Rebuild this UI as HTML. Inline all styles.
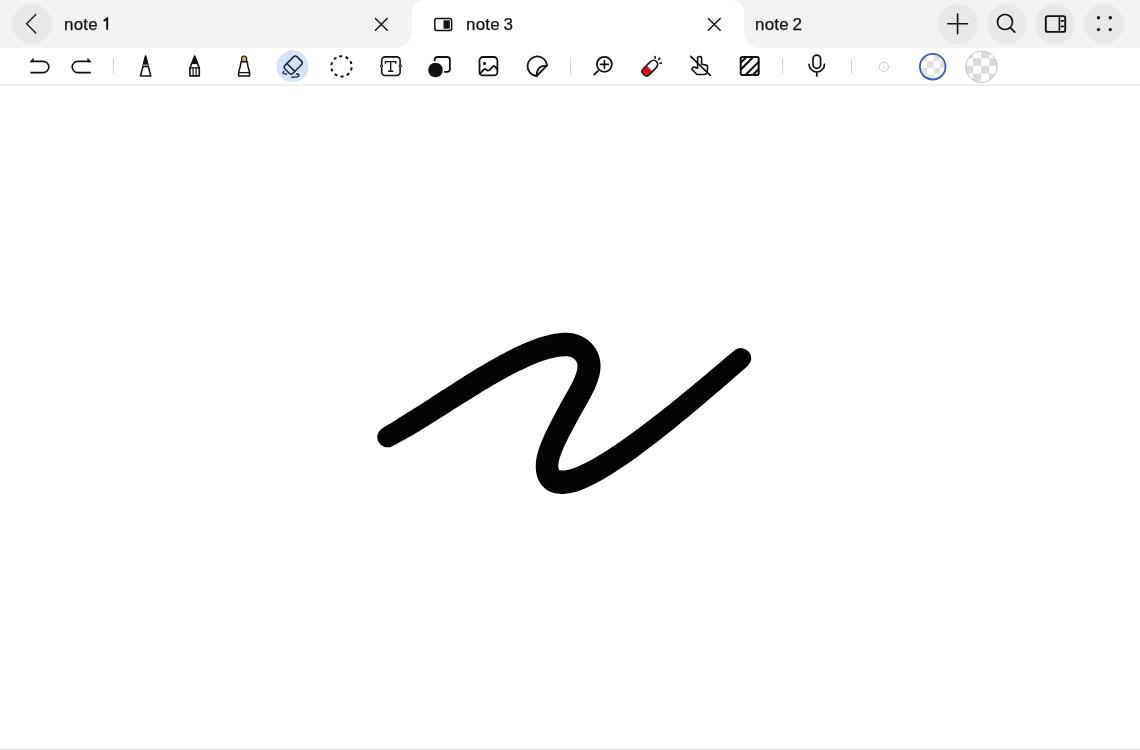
<!DOCTYPE html>
<html><head><meta charset="utf-8">
<style>
html,body{margin:0;padding:0;}
body{width:1140px;height:750px;position:relative;overflow:hidden;background:#fff;font-family:"Liberation Sans",sans-serif;}
.abs{position:absolute;}
#tabbar{left:0;top:0;width:1140px;height:48px;background:linear-gradient(#f1f2f4 0,#f1f2f4 24px,#fff 24px);}
#t1{left:0;top:0;width:412px;height:48px;background:#f1f2f4;border-bottom-right-radius:16px;}
#t3{left:412px;top:0;width:332px;height:48px;background:#fff;border-top-left-radius:12px;border-top-right-radius:12px;}
#t2{left:744px;top:0;width:396px;height:48px;background:#f1f2f4;border-bottom-left-radius:16px;}
.circ{width:40px;height:40px;border-radius:50%;background:#e7e8ea;}
.tt{font-size:17px;color:#111;line-height:20px;top:14.8px;-webkit-text-stroke:0.25px #111;letter-spacing:0.2px;word-spacing:-1.2px;will-change:transform;white-space:nowrap;}
#tb{left:0;top:48px;width:1140px;height:36px;background:#fff;border-bottom:2px solid #f0f0f0;}
#bot{left:0;top:749px;width:1140px;height:1px;background:#d6d6d6;}
svg{position:absolute;left:0;top:0;}
</style></head>
<body>
<div id="tabbar" class="abs"></div>
<div id="t1" class="abs"></div>
<div id="t3" class="abs"></div>
<div id="t2" class="abs"></div>
<div class="abs circ" style="left:11.5px;top:4px"></div>
<div class="abs circ" style="left:937.5px;top:4px"></div>
<div class="abs circ" style="left:986.5px;top:4px"></div>
<div class="abs circ" style="left:1035px;top:4px"></div>
<div class="abs circ" style="left:1084px;top:4px"></div>
<div class="abs tt" style="left:64px">note</div>
<div class="abs tt" style="left:466px">note 3</div>
<div class="abs tt" style="left:755px">note 2</div>
<div id="tb" class="abs"></div>
<div id="bot" class="abs"></div>

<svg width="1140" height="750" viewBox="0 0 1140 750" fill="none" stroke="#111" stroke-width="1.6" stroke-linecap="round" stroke-linejoin="round">
  <!-- back chevron -->
  <path d="M35.8,14.6 L26.6,23.8 L35.8,33" stroke-width="1.4" stroke="#1a1a1a"/>
  <!-- digit 1 -->
  <path d="M103.7,21 L107.2,18.4 L107.2,29.7" stroke-width="1.9" stroke-linecap="butt" stroke-linejoin="miter"/>
  <!-- close X tab1 -->
  <path d="M375.5,18.5 L387.2,30.2 M387.2,18.5 L375.5,30.2" stroke-width="1.45"/>
  <!-- tab icon -->
  <rect x="434.8" y="18.5" width="16.8" height="12" rx="2" stroke-width="1.5"/>
  <rect x="443.5" y="20.3" width="6.3" height="8.4" fill="#111" stroke="none"/>
  <!-- close X tab3 -->
  <path d="M708.4,18.4 L720.2,30.2 M720.2,18.4 L708.4,30.2" stroke-width="1.45"/>
  <!-- plus -->
  <path d="M947.8,23.8 L967.5,23.8 M957.6,14 L957.6,33.7" stroke-width="1.6"/>
  <!-- search -->
  <circle cx="1005" cy="22" r="7.5" stroke-width="1.7"/>
  <path d="M1010.6,27.8 L1014.8,32.2" stroke-width="1.7"/>
  <!-- panel -->
  <rect x="1045.8" y="16.1" width="19.4" height="15.8" rx="2" stroke-width="1.9"/>
  <path d="M1059.4,16.5 L1059.4,31.5" stroke-width="1.6"/>
  <path d="M1061.4,20.9 L1063.4,20.9 M1061.4,26.4 L1063.4,26.4" stroke-width="1.6"/>
  <!-- dots -->
  <g fill="#111" stroke="none">
    <circle cx="1098.5" cy="17.8" r="1.7"/><circle cx="1110.3" cy="17.8" r="1.7"/>
    <circle cx="1098.5" cy="29.6" r="1.7"/><circle cx="1110.3" cy="29.6" r="1.7"/>
  </g>

  <!-- undo -->
  <path d="M31,61.4 L43.2,61.4 A5.6,5.6 0 0 1 43.2,72.6 L30.4,72.6" stroke-width="1.6" stroke-linecap="butt"/>
  <path d="M29.9,61.9 L33.4,58.1 L33.8,61.9 Z" fill="#111" stroke="#111" stroke-width="0.3"/>
  <!-- redo -->
  <path d="M90.2,61.4 L77.8,61.4 A5.6,5.6 0 0 0 77.8,72.6 L90.8,72.6" stroke-width="1.6" stroke-linecap="butt"/>
  <path d="M91.2,61.9 L87.7,58.1 L87.3,61.9 Z" fill="#111" stroke="#111" stroke-width="0.3"/>
  <!-- separators -->
  <g stroke="#d4d4d4" stroke-width="1" stroke-linecap="butt">
    <path d="M113.5,58 L113.5,74"/><path d="M570.5,57.5 L570.5,74.8"/>
    <path d="M782.5,58.3 L782.5,74.2"/><path d="M851.5,58.3 L851.5,74.2"/>
  </g>

  <!-- pen 1 -->
  <path d="M145.6,56 L140.5,76 L150.8,76 Z" fill="#fff" stroke-width="1.5" stroke-linejoin="round"/>
  <path d="M145.6,56.2 L143.3,64.3 L147.9,64.3 Z" fill="#111" stroke="#111" stroke-width="1.1" stroke-linejoin="round"/>
  <path d="M143.1,64.6 L142.6,66.3 L148.6,66.3 L148.1,64.6 Z" fill="#8c8c8c" stroke="none"/>
  <path d="M142.4,66.7 L148.8,66.7" stroke-width="1.3" stroke-linecap="butt"/>
  <!-- pen 2 pencil -->
  <path d="M194.6,56.2 L189.9,68 L189.9,75.9 L199.3,75.9 L199.3,68 Z" fill="#fff" stroke-width="1.6"/>
  <path d="M194.6,56.3 L191.6,63.6 L197.6,63.6 Z" fill="#111" stroke="#111" stroke-width="1"/>
  <path d="M190.2,68.2 Q192.4,67.2 194.6,68 Q196.8,67.2 199,68.2" stroke-width="1.3"/>
  <path d="M193.1,68.3 L193.1,75.9 M196.1,68.3 L196.1,75.9" stroke-width="1.2"/>
  <!-- pen 3 marker -->
  <path d="M241.6,61.6 L241.6,58.6 A2.5,2.6 0 0 1 246.6,58.6 L246.6,61.6" fill="#c9b064" stroke-width="1.2"/>
  <path d="M241,61.8 L247.3,61.8 Q247.6,66 248.8,69.5 Q249.6,72 249.6,73 L249.6,76 L238.6,76 L238.6,73 Q238.6,72 239.4,69.5 Q240.6,66 241,61.8 Z" stroke-width="1.5"/>
  <path d="M238.8,72.6 L249.4,72.6" stroke-width="1.4"/>
  <!-- eraser selected bg -->
  <circle cx="292.6" cy="66.3" r="16" fill="#d7e2f7" stroke="none"/>
  <g transform="translate(293.2,65.1) rotate(-45)" stroke="#1c2435" stroke-width="1.5">
    <rect x="-8.6" y="-5.6" width="17.2" height="11.2" rx="2.6"/>
    <path d="M-3.3,-5.6 L-3.3,5.6"/>
  </g>
  <path d="M283.8,71.6 Q282.7,72.2 283,73.3 Q283.4,74.1 286.5,74" stroke="#1c2435" stroke-width="1.4"/>
  <path d="M296.3,74 L298.3,74 Q299.3,74.6 299,75.8 Q298.6,77.2 291.8,77.3" stroke="#1c2435" stroke-width="1.4"/>
  <!-- lasso -->
  <circle cx="341.5" cy="66.4" r="10.2" stroke-width="2" stroke-dasharray="3 3.41" stroke-linecap="butt" transform="rotate(-103 341.5 66.4)"/>
  <!-- text box -->
  <rect x="381.7" y="56.9" width="18.4" height="18.6" rx="3.5" stroke-width="1.6"/>
  <circle cx="381.5" cy="66" r="1.1" fill="#fff" stroke-width="1"/>
  <circle cx="400.2" cy="66" r="1.1" fill="#fff" stroke-width="1"/>
  <path d="M385.5,63.8 L385.5,61.6 L395.8,61.6 L395.8,63.8 M390.65,61.6 L390.65,71.3 M388,71.3 L393.3,71.3" stroke-width="1.4" stroke-linecap="butt" stroke-linejoin="miter"/>
  <!-- shapes -->
  <rect x="434.7" y="57" width="15.2" height="14.8" rx="2.8" stroke-width="1.8"/>
  <circle cx="435.5" cy="70" r="8.9" fill="#fff" stroke="none"/>
  <circle cx="435.5" cy="70" r="7.3" fill="#111" stroke="none"/>
  <!-- image -->
  <rect x="479.5" y="57" width="17.9" height="18.4" rx="3.5" stroke-width="1.8"/>
  <circle cx="484.5" cy="63.4" r="1.6" fill="#111" stroke="none"/>
  <path d="M479.8,73.8 L484,69.3 Q484.8,68.6 485.7,69.2 L487.4,70.4 Q488.4,71 489.3,70.2 L493,66.4 Q493.8,65.7 494.6,66.4 L497.2,69" stroke-width="1.8"/>
  <!-- sticker -->
  <path d="M536.7,76 A9.8,9.8 0 1 1 547.1,65.4 Z" stroke-width="1.8"/>
  <path d="M547.1,65.6 C541,65.4 536.8,67.5 536.7,75.8" stroke-width="1.8"/>
  <!-- zoom -->
  <circle cx="604.4" cy="64.3" r="7.5" stroke-width="1.8"/>
  <path d="M598,71 L594.2,74.6" stroke-width="1.8"/>
  <path d="M600.4,64.4 L608.4,64.4 M604.4,60.6 L604.4,68.4" stroke-width="1.6"/>
  <!-- laser -->
  <g transform="translate(649.9,68.1) rotate(-45)">
    <path d="M-0.5,-4.2 L-5.4,-4.2 Q-8.8,-4.2 -8.8,-0.8 L-8.8,0.8 Q-8.8,4.2 -5.4,4.2 L-0.5,4.2 Z" fill="#e0102a" stroke="none"/>
    <path d="M-5.4,-4.2 L3.5,-4.2 C7.2,-4.2 9.3,-2.4 9.3,0 C9.3,2.4 7.2,4.2 3.5,4.2 L-5.4,4.2 Q-8.8,4.2 -8.8,0.8 L-8.8,-0.8 Q-8.8,-4.2 -5.4,-4.2 Z" stroke="#151515" stroke-width="1.6"/>
  </g>
  <path d="M655.1,56.6 L655.2,58.1 M658.6,59.4 L659.8,58.2 M659.9,63 L661.3,63.1" stroke-width="1.6"/>
  <!-- touch off -->
  <path d="M697.6,63 L697.6,58.4 Q697.6,56.5 699.6,56.5 Q701.6,56.5 701.6,58.4 L701.6,64.3 L706.2,65.1 Q707.8,65.5 707.6,67.2 L707.2,71.6 Q706.8,74.5 704.4,74.5 L697,74.5 L692.2,69.6 Q691.4,68.4 692.6,67.6 Q694.4,66.6 696.4,67.8 L697.6,68.4 L697.6,63" stroke-width="1.6"/>
  <path d="M690.6,56.3 L710.3,75.3" stroke-width="1.6"/>
  <!-- hatch -->
  <defs><clipPath id="hc"><rect x="740.7" y="57" width="18" height="18"/></clipPath>
  <clipPath id="c1"><circle cx="932.7" cy="66.7" r="12"/></clipPath>
  <clipPath id="c2"><circle cx="981.5" cy="66.8" r="15.8"/></clipPath></defs>
  <g clip-path="url(#hc)" stroke-width="2.1" stroke-linecap="butt">
    <path d="M730,73.5 L780,23.5 M730,80.3 L780,30.3 M730,90.5 L780,40.5 M730,97.7 L780,47.7"/>
  </g>
  <rect x="740.7" y="57" width="18" height="18" rx="1.8" stroke-width="2"/>
  <!-- mic -->
  <g transform="translate(-0.4,0)">
  <rect x="813.4" y="55.1" width="7.6" height="13.2" rx="3.8" stroke-width="1.7"/>
  <path d="M809.5,64.3 A7.7,7.7 0 0 0 824.9,64.3 M817.2,72 L817.2,76" stroke-width="1.7"/></g>
  <!-- faint circle -->
  <circle cx="883.9" cy="66.9" r="4.6" stroke="#c9c9c9" stroke-width="1"/>
  <path d="M883,65 L885,66.9 L883,68.8" stroke="#d0d0d0" stroke-width="0.9"/>
  <!-- color 1 -->
  <g clip-path="url(#c1)" fill="#e2e2e2" stroke="none">
    <rect x="927.2" y="60.9" width="6.4" height="7.2"/><rect x="933.6" y="68.1" width="6.4" height="6.4"/>
    <rect x="933.6" y="54.5" width="6.4" height="6.4"/><rect x="920.8" y="68.1" width="6.4" height="6.4"/>
    <rect x="940" y="60.9" width="6.4" height="7.2"/><rect x="927.2" y="74.5" width="6.4" height="6.4"/>
    <rect x="920.8" y="54.5" width="6.4" height="6.4"/><rect x="940" y="74.5" width="6.4" height="6.4"/>
  </g>
  <circle cx="932.7" cy="66.7" r="12.8" stroke="#3d5ca8" stroke-width="1.8"/>
  <!-- color 2 -->
  <g clip-path="url(#c2)" fill="#dcdcdc" stroke="none">
    <rect x="981" y="51" width="8" height="7.3"/><rect x="973" y="58.3" width="8" height="7.4"/>
    <rect x="989" y="58.3" width="8" height="7.4"/><rect x="965" y="65.7" width="8" height="7.8"/>
    <rect x="981" y="65.7" width="8" height="7.8"/><rect x="973" y="73.5" width="8" height="7.5"/>
    <rect x="989" y="73.5" width="8" height="7.5"/><rect x="965" y="51" width="8" height="7.3"/>
  </g>
  <circle cx="981.5" cy="66.8" r="15.8" stroke="#c4c4c4" stroke-width="1"/>
  <!-- canvas stroke -->
  <path d="M392.2,446.2L395.1,444.7 398.0,443.2 400.9,441.6 403.9,440.0 406.9,438.3 409.9,436.6 413.0,434.9 416.0,433.1 419.1,431.2 422.2,429.3 425.3,427.4 428.4,425.4 431.6,423.5 434.7,421.5 437.9,419.5 441.1,417.5 444.3,415.4 447.5,413.4 450.7,411.4 453.9,409.3 457.1,407.3 460.4,405.2 463.6,403.2 466.8,401.2 470.1,399.2 473.3,397.2 476.5,395.2 479.7,393.2 482.9,391.3 486.1,389.3 489.3,387.5 492.4,385.6 495.6,383.8 498.7,382.0 501.8,380.2 504.9,378.5 508.0,376.8 511.0,375.2 514.0,373.6 517.0,372.1 520.0,370.6 522.9,369.2 525.8,367.9 528.6,366.6 531.4,365.3 534.1,364.2 536.8,363.1 539.5,362.1 542.1,361.1 544.6,360.3 547.1,359.5 549.5,358.8 551.8,358.2 554.1,357.7 556.3,357.2 558.4,356.8 560.5,356.6 562.4,356.4 564.2,356.3 566.2,356.2 566.4,356.3 566.8,356.3 567.1,356.3 567.5,356.3 567.9,356.3 568.2,356.4 568.6,356.4 568.9,356.5 569.2,356.6 569.5,356.6 569.8,356.7 570.1,356.8 570.4,356.9 570.7,357.0 571.0,357.1 571.3,357.2 571.6,357.3 571.8,357.4 572.1,357.6 572.3,357.7 572.6,357.8 572.8,358.0 573.0,358.1 573.3,358.3 573.5,358.4 573.7,358.6 573.9,358.7 574.1,358.9 574.3,359.1 574.5,359.2 574.7,359.4 574.9,359.6 575.0,359.8 575.2,360.0 575.4,360.2 575.5,360.4 575.7,360.6 575.8,360.8 576.0,361.0 576.1,361.2 576.2,361.4 576.4,361.6 576.5,361.8 576.6,362.1 576.7,362.3 576.8,362.5 576.9,362.7 577.0,363.0 577.0,363.2 577.1,363.5 577.2,363.7 577.2,363.9 577.3,364.2 577.3,364.4 577.4,364.7 577.4,364.9 577.5,365.2 577.5,365.5 577.5,365.7 577.5,366.0 577.5,366.4 577.5,366.8 577.4,367.2 577.4,367.6 577.4,368.1 577.3,368.5 577.2,369.0 577.1,369.5 577.0,370.0 576.9,370.6 576.8,371.1 576.6,371.7 576.4,372.2 576.3,372.8 576.1,373.4 575.9,374.0 575.6,374.6 575.4,375.3 575.2,375.9 574.9,376.6 574.6,377.2 574.3,377.9 574.0,378.6 573.7,379.3 573.4,380.0 573.1,380.7 572.7,381.5 572.4,382.2 572.0,382.9 571.6,383.7 571.2,384.4 570.8,385.2 570.4,386.0 570.0,386.7 569.6,387.5 569.2,388.3 568.7,389.1 568.3,389.9 567.9,390.7 567.4,391.5 567.0,392.3 566.5,393.1 566.0,393.9 565.6,394.8 565.1,395.6 564.6,396.4 564.1,397.3 563.6,398.1 563.2,399.0 562.7,399.8 562.2,400.7 561.7,401.6 561.2,402.4 560.7,403.3 560.2,404.2 559.8,405.1 559.3,405.9 558.8,406.8 558.3,407.7 557.8,408.6 557.4,409.5 556.9,410.3 556.5,411.2 556.0,412.0 555.6,412.9 555.1,413.8 554.6,414.7 554.2,415.6 553.7,416.5 553.2,417.4 552.7,418.3 552.2,419.2 551.8,420.2 551.3,421.1 550.8,422.0 550.3,423.0 549.8,423.9 549.3,424.9 548.8,425.8 548.4,426.8 547.9,427.7 547.4,428.7 546.9,429.7 546.5,430.6 546.0,431.6 545.5,432.6 545.1,433.5 544.6,434.5 544.2,435.5 543.8,436.4 543.3,437.4 542.9,438.4 542.5,439.4 542.1,440.3 541.7,441.3 541.3,442.3 540.9,443.3 540.5,444.3 540.1,445.2 539.8,446.2 539.4,447.2 539.1,448.2 538.8,449.1 538.5,450.1 538.2,451.1 537.9,452.1 537.6,453.1 537.4,454.0 537.1,455.0 536.9,456.0 536.7,457.0 536.5,458.0 536.3,459.0 536.2,460.0 536.1,461.0 535.9,462.0 535.9,463.0 535.8,464.0 535.8,465.0 535.8,465.9 535.7,466.7 535.8,467.4 535.8,468.1 535.8,468.7 535.9,469.4 535.9,470.1 536.0,470.7 536.1,471.4 536.2,472.1 536.3,472.7 536.4,473.4 536.5,474.1 536.7,474.7 536.8,475.4 537.0,476.0 537.2,476.6 537.4,477.3 537.6,477.9 537.9,478.5 538.1,479.2 538.4,479.8 538.7,480.4 539.0,481.0 539.3,481.6 539.7,482.2 540.0,482.8 540.4,483.4 540.8,483.9 541.2,484.5 541.6,485.0 542.0,485.6 542.5,486.1 543.0,486.6 543.5,487.1 544.0,487.6 544.5,488.1 545.0,488.5 545.6,488.9 546.2,489.4 546.7,489.8 547.3,490.2 547.9,490.5 548.6,490.9 549.2,491.2 549.8,491.5 550.5,491.8 551.1,492.1 551.8,492.3 552.4,492.5 553.1,492.7 553.8,492.9 554.5,493.1 555.2,493.2 555.8,493.4 556.5,493.5 557.2,493.6 557.9,493.6 558.6,493.7 559.3,493.7 559.1,493.7 561.2,493.9 564.1,493.9 567.0,493.6 569.8,493.2 572.7,492.6 575.5,491.9 578.4,491.0 581.3,489.9 584.2,488.8 587.2,487.5 590.2,486.1 593.3,484.6 596.4,483.0 599.6,481.3 602.8,479.5 606.1,477.6 609.4,475.6 612.7,473.5 616.1,471.3 619.5,469.1 623.0,466.8 626.5,464.4 630.0,461.9 633.6,459.4 637.2,456.9 640.8,454.2 644.4,451.6 648.0,448.8 651.6,446.1 655.3,443.3 658.9,440.4 662.6,437.6 666.2,434.7 669.9,431.8 673.5,428.9 677.1,426.0 680.7,423.0 684.3,420.1 687.9,417.2 691.4,414.2 694.9,411.3 698.4,408.4 701.8,405.5 705.2,402.7 708.5,399.8 711.8,397.0 715.0,394.3 718.2,391.6 721.3,388.9 724.4,386.3 727.3,383.7 730.2,381.2 733.1,378.7 735.8,376.3 738.5,374.0 741.1,371.8 743.5,369.7 745.9,367.6 748.2,365.6A10.25,10.25 0 0 0 735.0,350.0L732.6,351.9 730.2,354.0 727.7,356.1 725.0,358.3 722.3,360.6 719.6,362.9 716.7,365.3 713.8,367.8 710.8,370.3 707.7,372.9 704.6,375.5 701.4,378.2 698.2,380.9 694.9,383.6 691.5,386.4 688.1,389.2 684.7,392.0 681.3,394.8 677.8,397.7 674.3,400.5 670.7,403.4 667.2,406.2 663.6,409.1 660.0,411.9 656.4,414.7 652.8,417.5 649.2,420.3 645.6,423.1 642.0,425.8 638.4,428.5 634.8,431.1 631.3,433.7 627.7,436.3 624.2,438.8 620.8,441.2 617.3,443.6 613.9,445.9 610.6,448.1 607.3,450.3 604.0,452.3 600.8,454.3 597.7,456.2 594.6,458.0 591.6,459.7 588.7,461.3 585.9,462.7 583.2,464.1 580.5,465.3 578.0,466.4 575.6,467.4 573.4,468.2 571.2,468.9 569.3,469.5 567.5,470.0 565.8,470.3 564.4,470.4 563.3,470.5 562.4,470.5 560.9,470.3 559.9,470.3 559.8,470.3 559.7,470.3 559.7,470.3 559.6,470.3 559.5,470.3 559.5,470.3 559.5,470.3 559.4,470.3 559.4,470.3 559.4,470.3 559.4,470.3 559.4,470.3 559.4,470.3 559.4,470.3 559.4,470.3 559.4,470.3 559.4,470.3 559.4,470.4 559.4,470.4 559.4,470.4 559.4,470.4 559.4,470.4 559.4,470.4 559.4,470.5 559.4,470.5 559.4,470.5 559.4,470.5 559.4,470.5 559.4,470.5 559.4,470.5 559.4,470.4 559.3,470.4 559.3,470.4 559.3,470.3 559.2,470.3 559.2,470.2 559.1,470.2 559.1,470.1 559.1,470.0 559.0,469.9 559.0,469.8 558.9,469.7 558.8,469.6 558.8,469.4 558.7,469.3 558.7,469.1 558.6,469.0 558.6,468.8 558.5,468.6 558.5,468.4 558.5,468.1 558.4,467.9 558.4,467.7 558.4,467.4 558.3,467.2 558.3,466.9 558.3,466.6 558.3,466.3 558.2,466.1 558.3,465.6 558.3,465.2 558.3,464.7 558.4,464.3 558.4,463.8 558.5,463.2 558.6,462.7 558.7,462.1 558.8,461.5 559.0,460.9 559.1,460.3 559.3,459.7 559.4,459.0 559.6,458.3 559.8,457.6 560.1,456.9 560.3,456.2 560.6,455.5 560.8,454.7 561.1,453.9 561.4,453.2 561.7,452.4 562.0,451.6 562.3,450.8 562.7,450.0 563.0,449.2 563.4,448.3 563.7,447.5 564.1,446.7 564.5,445.8 564.9,445.0 565.3,444.1 565.7,443.2 566.1,442.4 566.5,441.5 567.0,440.6 567.4,439.7 567.8,438.9 568.3,438.0 568.7,437.1 569.2,436.2 569.7,435.3 570.1,434.4 570.6,433.5 571.1,432.6 571.5,431.7 572.0,430.8 572.5,429.9 573.0,429.1 573.4,428.2 573.9,427.3 574.4,426.4 574.9,425.5 575.3,424.6 575.8,423.7 576.3,422.9 576.8,422.0 577.2,421.1 577.7,420.2 578.2,419.4 578.6,418.6 579.0,417.8 579.5,417.0 579.9,416.1 580.4,415.3 580.8,414.5 581.3,413.7 581.7,412.8 582.2,412.0 582.7,411.2 583.2,410.3 583.6,409.5 584.1,408.7 584.6,407.8 585.1,407.0 585.6,406.1 586.0,405.3 586.5,404.4 587.0,403.6 587.5,402.7 588.0,401.9 588.4,401.0 588.9,400.2 589.4,399.3 589.8,398.4 590.3,397.6 590.8,396.7 591.2,395.8 591.7,395.0 592.1,394.1 592.6,393.2 593.0,392.3 593.4,391.4 593.9,390.6 594.3,389.7 594.7,388.8 595.1,387.9 595.5,387.0 595.8,386.1 596.2,385.2 596.6,384.3 596.9,383.4 597.3,382.5 597.6,381.5 597.9,380.6 598.2,379.7 598.5,378.8 598.8,377.8 599.0,376.9 599.3,375.9 599.5,375.0 599.7,374.0 599.9,373.0 600.0,372.0 600.2,371.1 600.3,370.1 600.4,369.1 600.4,368.0 600.5,367.0 600.5,366.0 600.5,365.1 600.5,364.2 600.4,363.3 600.3,362.5 600.2,361.6 600.1,360.7 599.9,359.9 599.8,359.0 599.6,358.1 599.4,357.3 599.1,356.5 598.9,355.6 598.6,354.8 598.3,354.0 598.0,353.2 597.6,352.4 597.2,351.6 596.8,350.9 596.4,350.1 596.0,349.3 595.6,348.6 595.1,347.9 594.6,347.2 594.1,346.5 593.6,345.8 593.0,345.1 592.5,344.4 591.9,343.8 591.3,343.2 590.7,342.6 590.1,342.0 589.4,341.4 588.8,340.8 588.1,340.2 587.4,339.7 586.7,339.2 585.9,338.7 585.2,338.2 584.4,337.7 583.7,337.3 582.9,336.9 582.1,336.5 581.3,336.1 580.5,335.7 579.6,335.4 578.8,335.0 577.9,334.7 577.1,334.4 576.2,334.2 575.3,333.9 574.4,333.7 573.5,333.5 572.6,333.3 571.7,333.2 570.8,333.1 569.8,333.0 568.9,332.9 567.9,332.8 567.0,332.8 565.8,332.8 563.2,332.8 560.4,333.0 557.5,333.4 554.7,333.8 551.8,334.3 549.0,334.9 546.1,335.7 543.1,336.5 540.2,337.3 537.3,338.3 534.3,339.4 531.3,340.5 528.3,341.7 525.2,342.9 522.2,344.3 519.1,345.7 516.0,347.1 512.9,348.6 509.8,350.2 506.6,351.8 503.5,353.4 500.3,355.1 497.1,356.9 493.9,358.7 490.7,360.5 487.5,362.3 484.2,364.2 481.0,366.2 477.7,368.1 474.5,370.1 471.2,372.1 468.0,374.1 464.7,376.1 461.4,378.2 458.2,380.2 454.9,382.3 451.7,384.4 448.4,386.5 445.2,388.5 442.0,390.6 438.7,392.7 435.5,394.8 432.4,396.8 429.2,398.9 426.0,400.9 422.9,402.9 419.8,404.9 416.7,406.9 413.7,408.8 410.6,410.7 407.6,412.6 404.6,414.5 401.7,416.3 398.8,418.1 396.0,419.9 393.2,421.7 390.4,423.4 387.7,425.0 385.0,426.6 382.4,428.2A10.25,10.25 0 0 0 392.2,446.2Z" fill="#050505" stroke="none"/>
</svg>
</body></html>
